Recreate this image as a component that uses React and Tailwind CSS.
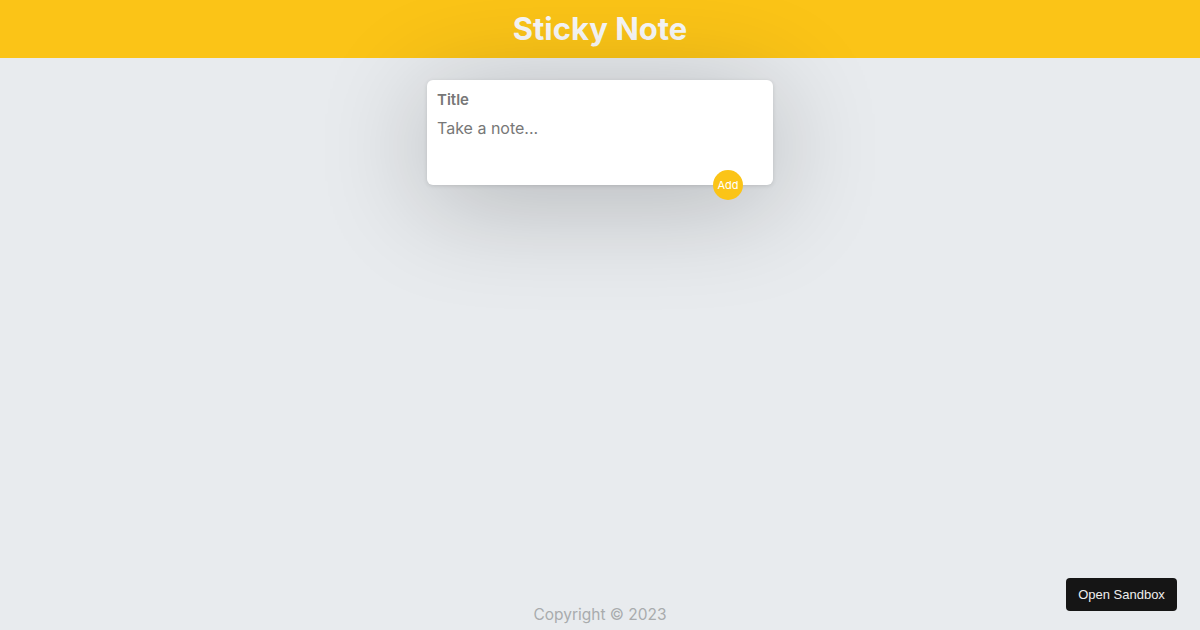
import { useState } from "react";

const FONT = { fontFamily: 'Inter, "Noto Sans", sans-serif' };

const CreateNote = () => {
  const [note, setNote] = useState({ title: "", content: "" });

  const handleChange = (e) => {
    const { name, value } = e.target;
    setNote((prev) => ({ ...prev, [name]: value }));
  };

  return (
    <form className="relative mx-auto mt-[22px] w-[346px] rounded-md bg-white px-[10px] pt-[10px] pb-[8px] shadow-[0_1px_4px_rgba(0,0,0,0.12),0_15px_110px_rgba(0,0,0,0.24)]">
      <input
        name="title"
        value={note.title}
        onChange={handleChange}
        placeholder="Title"
        className="block h-5 w-full text-[15px] font-semibold text-gray-700 outline-none placeholder:text-[#777]"
      />
      <textarea
        name="content"
        value={note.content}
        onChange={handleChange}
        placeholder="Take a note..."
        rows={3}
        className="mt-[8px] block h-[59px] w-full resize-none text-[16px] leading-5 text-gray-700 outline-none placeholder:text-[#777]"
      />
      <button
        type="button"
        className="absolute right-[30px] bottom-[-15px] h-[30px] w-[30px] rounded-full bg-[#fbc417] text-[11px] text-white"
      >
        Add
      </button>
    </form>
  );
};

const App = () => {
  return (
    <div className="relative min-h-[630px] bg-[#e8ebee]" style={FONT}>
      <header className="flex h-[58px] items-center justify-center bg-[#fbc417]">
        <h1 className="text-[31px] font-bold text-[#f7f7f7]">Sticky Note</h1>
      </header>
      <CreateNote />
      <footer className="absolute bottom-0 w-full pb-[4px] text-center">
        <p className="text-[15.5px] text-[#a9abad]">Copyright © 2023</p>
      </footer>
      <button
        className="absolute right-[23px] bottom-[19px] h-[33px] w-[111px] rounded-[4px] bg-[#151515] text-[13px] text-[#eee]"
        style={{ fontFamily: '"Liberation Sans", Arial, sans-serif' }}
      >
        Open Sandbox
      </button>
    </div>
  );
};

export default App;
